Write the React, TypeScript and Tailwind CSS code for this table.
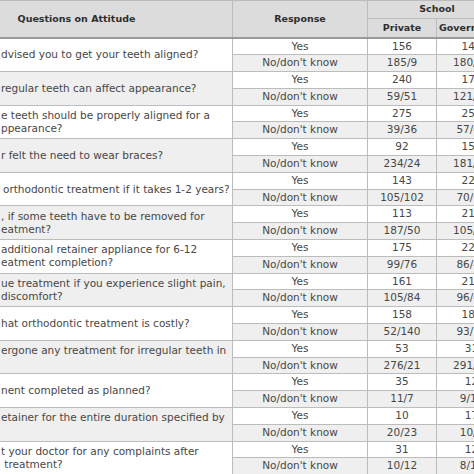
import React from 'react';

type Row = {
  q: string[];
  yes: [string, string];
  no: [string, string];
};

// visible part of the attitude questionnaire table
const rows: Row[] = [
  { q: ['dvised you to get your teeth aligned?'], yes: ['156', '146'], no: ['185/9', '180/24'] },
  { q: ['regular teeth can affect appearance?'], yes: ['240', '170'], no: ['59/51', '121/59'] },
  { q: ['e teeth should be properly aligned for a', 'ppearance?'], yes: ['275', '250'], no: ['39/36', '57/43'] },
  { q: ['r felt the need to wear braces?'], yes: ['92', '150'], no: ['234/24', '181/19'] },
  { q: ['orthodontic treatment if it takes 1-2 years?'], yes: ['143', '220'], no: ['105/102', '70/60'] },
  { q: [', if some teeth have to be removed for', 'eatment?'], yes: ['113', '210'], no: ['187/50', '105/35'] },
  { q: ['additional retainer appliance for 6-12', 'eatment completion?'], yes: ['175', '220'], no: ['99/76', '86/44'] },
  { q: ['ue treatment if you experience slight pain,', 'discomfort?'], yes: ['161', '210'], no: ['105/84', '96/44'] },
  { q: ['hat orthodontic treatment is costly?'], yes: ['158', '180'], no: ['52/140', '93/77'] },
  { q: ['ergone any treatment for irregular teeth in', '\u00a0'], yes: ['53', '31'], no: ['276/21', '291/28'] },
  { q: ['nent completed as planned?'], yes: ['35', '12'], no: ['11/7', '9/10'] },
  { q: ['etainer for the entire duration specified by', '\u00a0'], yes: ['10', '17'], no: ['20/23', '10/4'] },
  { q: ['t your doctor for any complaints after', '\u00a0treatment?'], yes: ['31', '12'], no: ['10/12', '8/11'] },
];

const cell = 'border border-[#bcbcbc] p-0 text-center whitespace-nowrap overflow-hidden';

const App: React.FC = () => {
  return (
    <div className="w-[474px] h-[474px] overflow-hidden bg-white">
      <table className="ml-[-80px] w-[586px] table-fixed border-collapse font-['DejaVu_Sans',sans-serif] text-[10.5px] text-[#474747]">
        <colgroup>
          <col className="w-[312px]" />
          <col className="w-[135px]" />
          <col className="w-[69px]" />
          <col className="w-[70px]" />
        </colgroup>
        <thead className="bg-[#dcdcdc] text-[9.5px] font-bold text-[#2e2e2e]">
          <tr className="h-[18px]">
            <th rowSpan={2} className={`${cell} border-b-2 border-b-[#9a9a9a]`}>Questions on Attitude</th>
            <th rowSpan={2} className={`${cell} border-b-2 border-b-[#9a9a9a]`}>Response</th>
            <th colSpan={2} className={cell}>School</th>
          </tr>
          <tr className="h-[19px]">
            <th className={`${cell} border-b-2 border-b-[#9a9a9a]`}>Private</th>
            <th className={`${cell} border-b-2 border-b-[#9a9a9a] text-left pl-[2px]`}>Government</th>
          </tr>
        </thead>
        <tbody>
          {rows.map((r, i) => {
            const qBg = i % 2 === 0 ? 'bg-white' : 'bg-[#efefef]';
            return (
              <React.Fragment key={i}>
                <tr className="h-[16.8px] bg-white">
                  <td rowSpan={2} className={`${cell} ${qBg} text-left pl-[80px] leading-[13px]`}>
                    {r.q.map((line, j) => (
                      <div key={j} className={`whitespace-pre ${i === 4 ? 'pl-[2px]' : ''}`}>{line}</div>
                    ))}
                  </td>
                  <td className={cell}>Yes</td>
                  <td className={cell}>{r.yes[0]}</td>
                  <td className={cell}>{r.yes[1]}</td>
                </tr>
                <tr className="h-[16.8px] bg-[#efefef]">
                  <td className={cell}>No/don&apos;t know</td>
                  <td className={cell}>{r.no[0]}</td>
                  <td className={cell}>{r.no[1]}</td>
                </tr>
              </React.Fragment>
            );
          })}
        </tbody>
      </table>
    </div>
  );
};

export default App;
